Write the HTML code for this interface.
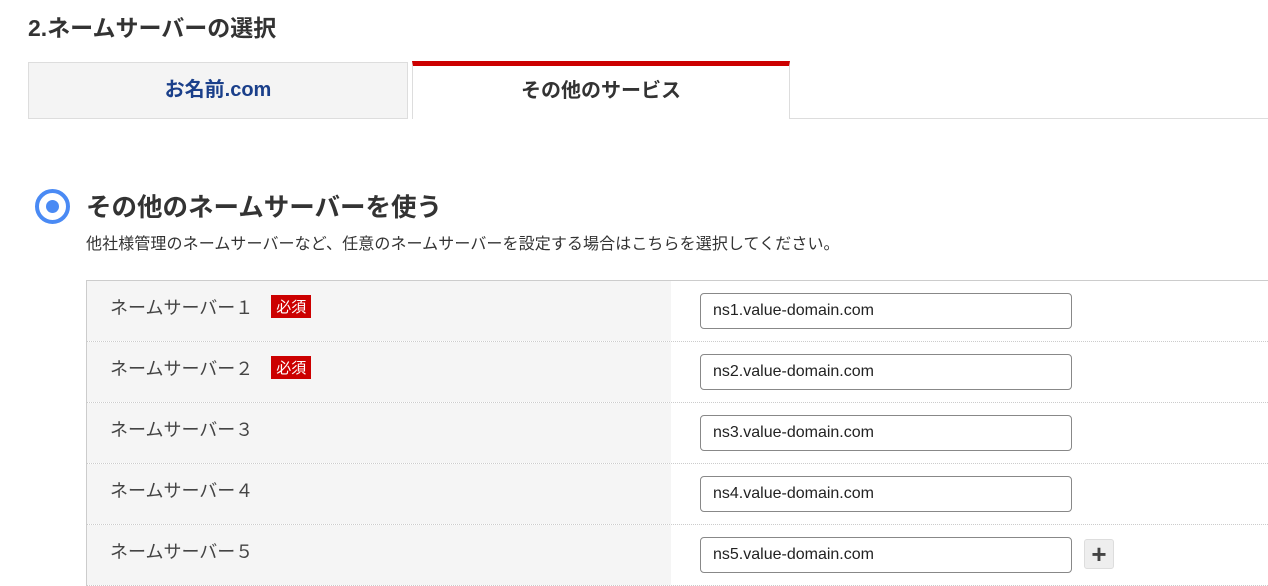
<!DOCTYPE html>
<html><head><meta charset="utf-8"><style>
*{box-sizing:border-box;margin:0;padding:0}
body{width:1268px;height:574px;overflow:hidden;background:#fff;font-family:"Liberation Sans","Noto Sans CJK JP",sans-serif;color:#333;position:relative}
.a{position:absolute}
h2{position:absolute;left:28px;top:9px;font-size:23px;font-weight:bold;color:#333}
.tab{position:absolute;top:62px;height:57px;font-size:20px;font-weight:bold;display:flex;align-items:center;justify-content:center}
.t1{left:28px;width:380px;background:#f4f4f4;border:1px solid #ddd;color:#1a3f8a;padding-bottom:6px}
.t2{left:412px;width:378px;border:1px solid #ddd;border-top:5px solid #c00;border-bottom:none;top:61px;height:58px;color:#333;padding-bottom:8px}
.line{left:790px;top:118px;width:478px;height:1px;background:#ddd}
.radio{left:35px;top:189px;width:35px;height:35px;border-radius:50%;border:4px solid #4a8af4;background:#fff}
.radio:after{content:"";position:absolute;left:7px;top:7px;width:13px;height:13px;border-radius:50%;background:#4a8af4}
.h{left:86px;top:187px;font-size:25.5px;font-weight:bold;color:#333}
.sub{left:86px;top:230px;font-size:16px;letter-spacing:0.1px;color:#333}
.tbl{left:86px;top:280px;width:1182px;border-top:1px solid #ccc;border-left:1px solid #ccc}
.row{height:61px;border-bottom:1px dotted #ccc;display:flex;position:relative}
.lab{width:584px;background:#f5f5f5;padding:13px 0 0 23px;font-size:18px;color:#444}
.bd{display:inline-block;background:#c00;color:#fff;font-size:15px;padding:1px 5px;margin-left:18px;vertical-align:2px}
.inp{position:absolute;left:613px;top:12px;width:372px;height:36px;border:1px solid #888;border-radius:4px;padding:0 12px;line-height:34px;font-size:16px;color:#222}
.plus{position:absolute;left:997px;top:14px;width:30px;height:30px;background:#eee;border:1px solid #ddd;border-radius:3px;font-size:26px;font-weight:bold;color:#444;text-align:center;line-height:28px}
</style></head><body>
<h2>2.ネームサーバーの選択</h2>
<div class="tab t1">お名前.com</div>
<div class="tab t2">その他のサービス</div>
<div class="a line"></div>
<div class="a radio"></div>
<div class="a h">その他のネームサーバーを使う</div>
<div class="a sub">他社様管理のネームサーバーなど、任意のネームサーバーを設定する場合はこちらを選択してください。</div>
<div class="a tbl">
<div class="row"><div class="lab">ネームサーバー１<span class="bd">必須</span></div><div class="inp">ns1.value-domain.com</div></div>
<div class="row"><div class="lab">ネームサーバー２<span class="bd">必須</span></div><div class="inp">ns2.value-domain.com</div></div>
<div class="row"><div class="lab">ネームサーバー３</div><div class="inp">ns3.value-domain.com</div></div>
<div class="row"><div class="lab">ネームサーバー４</div><div class="inp">ns4.value-domain.com</div></div>
<div class="row"><div class="lab">ネームサーバー５</div><div class="inp">ns5.value-domain.com</div><div class="plus">+</div></div>
</div>
</body></html>
